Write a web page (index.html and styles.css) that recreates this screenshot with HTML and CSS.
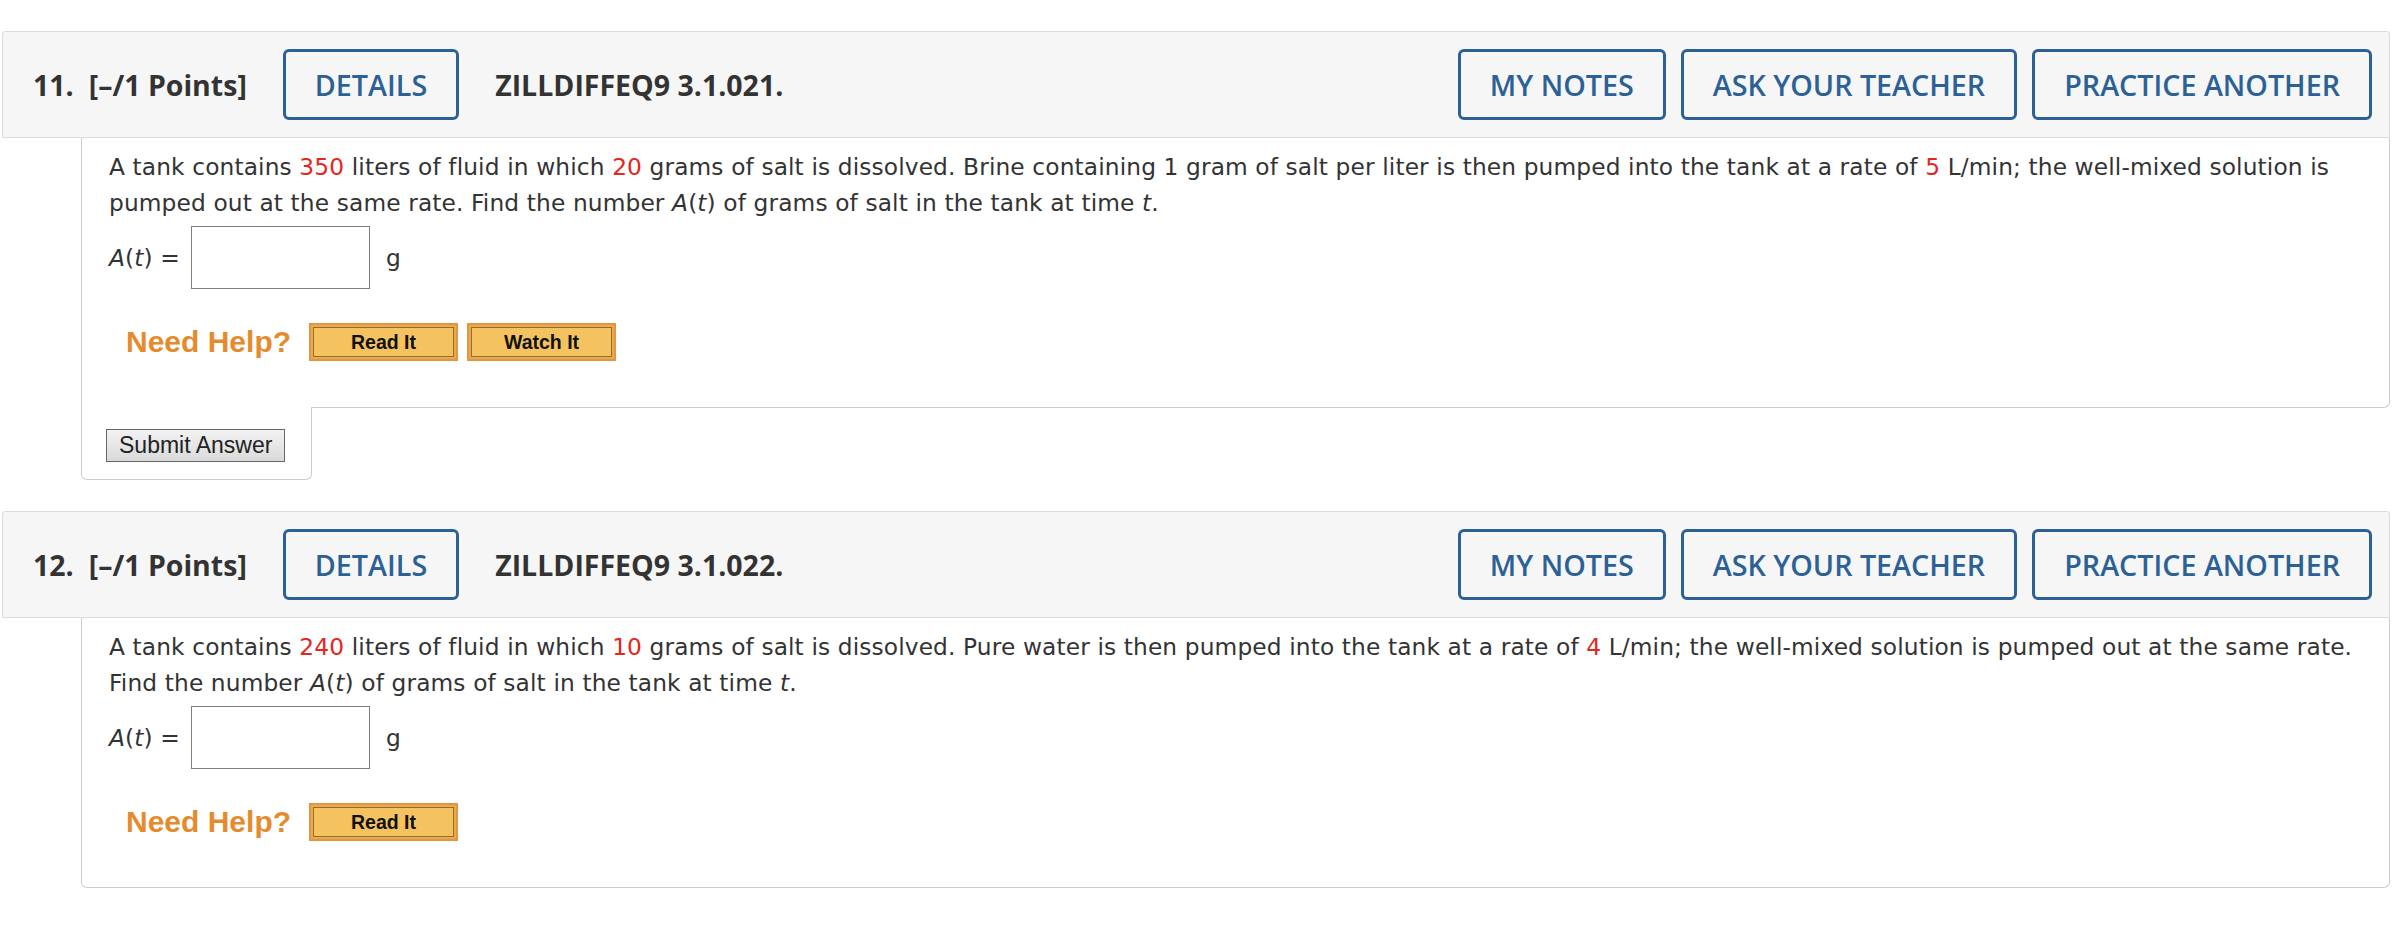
FILE: index.html
```html
<!DOCTYPE html>
<html lang="en">
<head>
<meta charset="utf-8">
<title>Questions</title>
<link rel="stylesheet" href="styles.css">
</head>
<body>
<div class="page">
  <section class="q">
    <div class="q-head">
      <span class="q-num">11.</span>
      <span class="q-pts">[–/1 Points]</span>
      <button class="hbtn">DETAILS</button>
      <span class="q-code">ZILLDIFFEQ9 3.1.021.</span>
      <div class="q-actions">
        <button class="hbtn">MY NOTES</button>
        <button class="hbtn">ASK YOUR TEACHER</button>
        <button class="hbtn">PRACTICE ANOTHER</button>
      </div>
    </div>
    <div class="q-body with-tab">
      <p class="prompt">A tank contains <span class="num">350</span> liters of fluid in which <span class="num">20</span> grams of salt is dissolved. Brine containing 1 gram of salt per liter is then pumped into the tank at a rate of <span class="num">5</span> L/min; the well-mixed solution is pumped out at the same rate. Find the number <i>A</i>(<i>t</i>) of grams of salt in the tank at time <i>t</i>.</p>
      <div class="answer">
        <span class="lbl"><i>A</i>(<i>t</i>) =</span>
        <input class="ans-box" type="text">
        <span class="unit">g</span>
      </div>
      <div class="help">
        <span class="need">Need Help?</span>
        <button class="hlp">Read It</button>
        <button class="hlp">Watch It</button>
      </div>
    </div>
    <div class="submit-tab">
      <button class="submit">Submit Answer</button>
    </div>
  </section>

  <section class="q q-second">
    <div class="q-head">
      <span class="q-num">12.</span>
      <span class="q-pts">[–/1 Points]</span>
      <button class="hbtn">DETAILS</button>
      <span class="q-code">ZILLDIFFEQ9 3.1.022.</span>
      <div class="q-actions">
        <button class="hbtn">MY NOTES</button>
        <button class="hbtn">ASK YOUR TEACHER</button>
        <button class="hbtn">PRACTICE ANOTHER</button>
      </div>
    </div>
    <div class="q-body">
      <p class="prompt">A tank contains <span class="num">240</span> liters of fluid in which <span class="num">10</span> grams of salt is dissolved. Pure water is then pumped into the tank at a rate of <span class="num">4</span> L/min; the well-mixed solution is pumped out at the same rate. Find the number <i>A</i>(<i>t</i>) of grams of salt in the tank at time <i>t</i>.</p>
      <div class="answer">
        <span class="lbl"><i>A</i>(<i>t</i>) =</span>
        <input class="ans-box" type="text">
        <span class="unit">g</span>
      </div>
      <div class="help">
        <span class="need">Need Help?</span>
        <button class="hlp">Read It</button>
      </div>
    </div>
  </section>
</div>
</body>
</html>
```
FILE: styles.css
```css
html, body {
  margin: 0;
  padding: 0;
  background: #ffffff;
}

.page {
  padding: 31px 14px 0 2px;
  width: 2388px;
}

.q {
  display: flex;
  flex-direction: column;
}

.q-second {
  margin-top: 31px;
}

.q-head {
  height: 105px;
  display: flex;
  align-items: center;
  background: #f6f6f6;
  border: 1px solid #dcdcdc;
  border-radius: 3px 3px 0 0;
  padding: 0 17px 0 30px;
  font-family: "Open Sans", sans-serif;
  color: #333333;
}

.q-num {
  font-weight: 700;
  font-size: 28.5px;
}

.q-pts {
  font-weight: 700;
  font-size: 28.5px;
  margin-left: 15px;
}

.q-code {
  font-weight: 700;
  font-size: 28.5px;
  margin-left: 36px;
}

.hbtn {
  height: 71px;
  box-sizing: border-box;
  padding: 0 29px;
  border: 3px solid #2b6197;
  border-radius: 6px;
  background: transparent;
  color: #2b6197;
  font-family: "Open Sans", sans-serif;
  font-weight: 600;
  font-size: 28.7px;
  cursor: pointer;
}

.q-head > .hbtn {
  margin-left: 36px;
}

.q-actions {
  margin-left: auto;
  display: flex;
  gap: 15px;
}

.q-body {
  margin-left: 79px;
  border: 1px solid #cccccc;
  border-top: none;
  border-radius: 0 0 6px 6px;
  padding: 11px 4px 46px 27px;
  font-family: "DejaVu Sans", Verdana, sans-serif;
  font-size: 23.3px;
  letter-spacing: 0.12px;
  color: #333333;
  background: #ffffff;
}

.q-body.with-tab {
  border-radius: 0 0 6px 0;
}

.prompt {
  margin: 0;
  line-height: 36px;
}

.num {
  color: #e5261e;
}

.answer {
  display: flex;
  align-items: center;
  margin-top: 5px;
}

.lbl {
  margin-right: 11px;
}

.ans-box {
  width: 179px;
  height: 63px;
  box-sizing: border-box;
  border: 1px solid #808080;
  margin: 0;
  padding: 0 6px;
  font-size: 23px;
  background: #ffffff;
}

.unit {
  margin-left: 16px;
}

.help {
  display: flex;
  align-items: center;
  margin-top: 34px;
  padding-left: 17px;
  letter-spacing: 0;
}

.need {
  font-family: "Liberation Sans", Arial, sans-serif;
  font-weight: 700;
  font-size: 30px;
  color: #e58b2e;
  margin-right: 18px;
}

.hlp {
  width: 149px;
  height: 38px;
  box-sizing: border-box;
  margin: 0 9px 0 0;
  padding: 0;
  background: #f4c25e;
  border: 2px solid #e3953f;
  box-shadow: inset 0 0 0 2px #eba84c, inset 0 0 0 3px #8f6f32;
  font-family: "Liberation Sans", Arial, sans-serif;
  font-weight: 700;
  font-size: 19.5px;
  color: #111111;
  cursor: pointer;
}

.submit-tab {
  position: relative;
  margin: -1px 0 0 79px;
  width: 231px;
  box-sizing: border-box;
  height: 73px;
  border: 1px solid #cccccc;
  border-top: none;
  border-radius: 0 0 6px 6px;
  background: #ffffff;
  padding: 22px 0 0 24px;
}

.submit {
  height: 33px;
  box-sizing: border-box;
  padding: 0 12px;
  border: 1px solid #666666;
  background: linear-gradient(#f2f2f2, #dadada);
  font-family: "Liberation Sans", Arial, sans-serif;
  font-size: 23px;
  color: #222222;
  line-height: 1;
  cursor: pointer;
}
```
